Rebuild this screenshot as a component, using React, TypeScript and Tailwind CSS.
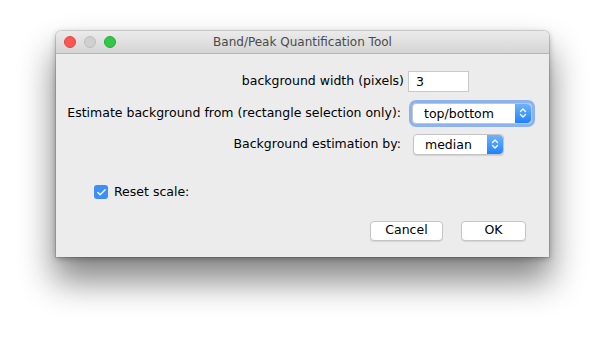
import { Check } from "lucide-react";

function Stepper() {
    return (
        <div className="flex flex-col items-center justify-center w-[16px] h-full rounded-r-[4px] bg-gradient-to-b from-[#6cb3fa] to-[#1a82fb]">
            <svg width="8" height="12" viewBox="0 0 8 12" fill="none" stroke="white" strokeWidth="1.4" strokeLinecap="round" strokeLinejoin="round">
                <path d="M1.5 4.5 L4 2 L6.5 4.5" />
                <path d="M1.5 7.5 L4 10 L6.5 7.5" />
            </svg>
        </div>
    )
}

function Select(props: { text: string, width: string, focused?: boolean }) {
    return (
        <div className={props.width + " h-[21px] flex items-stretch bg-white rounded-[4px] border border-[#c4c4c4] " + (props.focused ? "shadow-[0_0_0_3px_rgba(110,160,240,0.75)] border-[#7fa8e8]" : "shadow-[0_1px_1px_rgba(0,0,0,0.12)]")}>
            <p className="flex-1 pl-[11px] leading-[19px]">{props.text}</p>
            <Stepper />
        </div>
    )
}

function Button(props: { text: string, width: string }) {
    return (
        <div className={props.width + " h-[20px] flex items-center justify-center bg-white rounded-[4px] border border-[#c5c5c5] shadow-[0_1px_1px_rgba(0,0,0,0.1)]"}>
            <p>{props.text}</p>
        </div>
    )
}

export default function App() {
    return (
        <div className="w-[605px] h-[337px] bg-white pt-[31px] pl-[56px] font-['DejaVu_Sans',sans-serif] text-[12.5px] text-black">
            <div className="w-[493px] h-[226px] flex flex-col rounded-t-[5px] bg-[#ececec] shadow-[0_22px_34px_2px_rgba(0,0,0,0.48),0_2px_6px_rgba(0,0,0,0.28),0_0_0_1px_rgba(0,0,0,0.12)] overflow-hidden">

                {/* title bar */}
                <div className="relative h-[23px] flex items-center justify-center bg-gradient-to-b from-[#ebebeb] to-[#d5d5d5] border-b border-[#b4b4b4]">
                    <div className="absolute left-[8px] top-[5px] flex gap-[8px]">
                        <div className="w-[12px] h-[12px] rounded-full bg-[#fc5753] border border-[#df4744]" />
                        <div className="w-[12px] h-[12px] rounded-full bg-[#d0d0d0] border border-[#bebebe]" />
                        <div className="w-[12px] h-[12px] rounded-full bg-[#33c748] border border-[#27aa35]" />
                    </div>
                    <p className="text-[12px] text-[#4a4a4a]">Band/Peak Quantification Tool</p>
                </div>

                {/* body */}
                <div className="flex flex-col pt-[16px]">
                    <div className="flex items-center h-[22px]">
                        <p className="w-[348px] text-right">background width (pixels)</p>
                        <div className="ml-[4px] w-[61px] h-[21px] bg-white border border-[#c9c9c9] pl-[7px] leading-[19px]">3</div>
                    </div>
                    <div className="flex items-center h-[22px] mt-[10px]">
                        <p className="w-[345px] text-right">Estimate background from (rectangle selection only):</p>
                        <div className="ml-[11px]">
                            <Select text="top/bottom" width="w-[120px]" focused />
                        </div>
                    </div>
                    <div className="flex items-center h-[22px] mt-[9px]">
                        <p className="w-[345px] text-right">Background estimation by:</p>
                        <div className="ml-[12px]">
                            <Select text="median" width="w-[91px]" />
                        </div>
                    </div>

                    <div className="flex items-center mt-[28px] pl-[38px]">
                        <div className="w-[14px] h-[14px] rounded-[3px] bg-[#3b8ff6] flex items-center justify-center">
                            <Check size={11} color="white" strokeWidth={3} />
                        </div>
                        <p className="ml-[6px]">Reset scale:</p>
                    </div>

                    <div className="flex justify-end gap-[18px] mt-[19px] pr-[23px]">
                        <Button text="Cancel" width="w-[73px]" />
                        <Button text="OK" width="w-[65px]" />
                    </div>
                </div>
            </div>
        </div>
    )
}
